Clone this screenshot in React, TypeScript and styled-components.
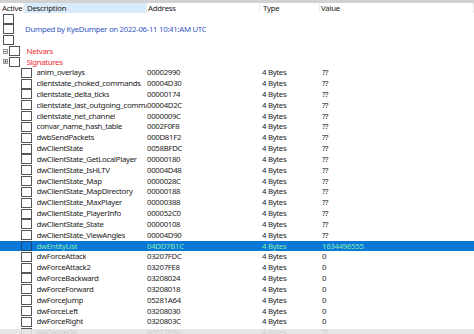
import React from 'react';
import styled, { createGlobalStyle } from 'styled-components';

const Global = createGlobalStyle`
  html, body { margin: 0; padding: 0; background: #ffffff; }
  body { width: 474px; height: 334px; overflow: hidden; font-family: "Noto Sans", "Open Sans", sans-serif; }
`;

const Frame = styled.div`
  position: relative;
  width: 474px;
  height: 334px;
  overflow: hidden;
  background: #ffffff;
  display: flex;
  flex-direction: column;
`;

const TopBar = styled.div`
  flex: none;
  height: 2.6px;
  background: #d2d2d2;
`;

const Header = styled.div`
  flex: none;
  display: grid;
  grid-template-columns: 24px 123px 113px 60px 1fr;
  height: 10.6px;
  font-size: 7.8px;
  letter-spacing: -0.25px;
  color: #1c1c1c;
  line-height: 11px;
`;

const HeadCell = styled.div<{ $hot?: boolean; $pad: number }>`
  padding-left: ${p => p.$pad}px;
  background: ${p => (p.$hot ? '#d9ebf9' : 'transparent')};
  border-right: 1px solid #ececec;
  white-space: nowrap;
  overflow: hidden;
`;

const List = styled.div`
  flex: 1;
  overflow: hidden;
  display: flex;
  flex-direction: column;
`;

const Row = styled.div<{ $selected?: boolean }>`
  flex: none;
  display: grid;
  grid-template-columns: 147px 115px 60px 1fr;
  height: 10.833px;
  align-items: center;
  font-size: 7.8px;
  letter-spacing: -0.3px;
  line-height: 10.833px;
  color: ${p => (p.$selected ? '#84eab0' : '#1c1c1c')};
  background: ${p => (p.$selected ? '#0a78d6' : 'transparent')};
`;

const TreeCell = styled.div<{ $indent: number; $wide?: boolean }>`
  grid-column: ${p => (p.$wide ? '1 / -1' : 'auto')};
  display: flex;
  align-items: center;
  padding-left: ${p => p.$indent}px;
  overflow: hidden;
  white-space: nowrap;
  height: 100%;
`;

const Expander = styled.svg`
  flex: none;
  width: 5px;
  height: 5px;
  margin-right: 1px;
`;

const Check = styled.span<{ $selected?: boolean }>`
  flex: none;
  box-sizing: border-box;
  width: 10.5px;
  height: 10px;
  border: 1px solid ${p => (p.$selected ? '#1b4a80' : '#555555')};
  background: ${p => (p.$selected ? 'transparent' : '#ffffff')};
`;

const Label = styled.span<{ $gap: number; $tone?: 'red' | 'blue' }>`
  margin-left: ${p => p.$gap}px;
  color: ${p => (p.$tone === 'red' ? '#ee2a2a' : p.$tone === 'blue' ? '#3557c4' : 'inherit')};
  overflow: hidden;
  white-space: nowrap;
`;

const Cell = styled.div`
  white-space: nowrap;
  overflow: hidden;
`;

const HScroll = styled.div`
  position: absolute;
  left: 0;
  right: 0;
  bottom: 0;
  height: 5.5px;
  background: rgba(226, 226, 226, 0.88);
`;

type Item = {
  kind: 'top' | 'group' | 'child';
  text?: string;
  tone?: 'red' | 'blue';
  open?: boolean;
  addr?: string;
  val?: string;
  selected?: boolean;
};

const children: [string, string, string][] = [
  ['anim_overlays', '00002990', '??'],
  ['clientstate_choked_commands', '00004D30', '??'],
  ['clientstate_delta_ticks', '00000174', '??'],
  ['clientstate_last_outgoing_command', '00004D2C', '??'],
  ['clientstate_net_channel', '0000009C', '??'],
  ['convar_name_hash_table', '0002F0F8', '??'],
  ['dwbSendPackets', '000D81F2', '??'],
  ['dwClientState', '0058BFDC', '??'],
  ['dwClientState_GetLocalPlayer', '00000180', '??'],
  ['dwClientState_IsHLTV', '00004D48', '??'],
  ['dwClientState_Map', '0000028C', '??'],
  ['dwClientState_MapDirectory', '00000188', '??'],
  ['dwClientState_MaxPlayer', '00000388', '??'],
  ['dwClientState_PlayerInfo', '000052C0', '??'],
  ['dwClientState_State', '00000108', '??'],
  ['dwClientState_ViewAngles', '00004D90', '??'],
  ['dwEntityList', '04DD7B1C', '1634496555'],
  ['dwForceAttack', '03207FDC', '0'],
  ['dwForceAttack2', '03207FE8', '0'],
  ['dwForceBackward', '03208024', '0'],
  ['dwForceForward', '03208018', '0'],
  ['dwForceJump', '05281A64', '0'],
  ['dwForceLeft', '03208030', '0'],
  ['dwForceRight', '0320803C', '0'],
  ['dwGameDir', '00627EB0', '??'],
];

const items: Item[] = [
  { kind: 'top' },
  { kind: 'top', text: 'Dumped by KyeDumper on 2022-06-11 10:41:AM UTC', tone: 'blue' },
  { kind: 'top' },
  { kind: 'group', text: 'Netvars', tone: 'red', open: true },
  { kind: 'group', text: 'Signatures', tone: 'red', open: false },
  ...children.map(([text, addr, val]) => ({
    kind: 'child' as const,
    text,
    addr,
    val,
    selected: text === 'dwEntityList',
  })),
];

const ExpIcon: React.FC<{ open?: boolean }> = ({ open }) => (
  <Expander viewBox="0 0 5 5">
    <rect x="0.5" y="0.5" width="4" height="4" fill="#fff" stroke="#7a7a7a" strokeWidth="0.8" />
    <line x1="1.3" y1="2.5" x2="3.7" y2="2.5" stroke="#333" strokeWidth="0.8" />
    {!open && <line x1="2.5" y1="1.3" x2="2.5" y2="3.7" stroke="#333" strokeWidth="0.8" />}
  </Expander>
);

export default function App() {
  return (
    <Frame>
      <Global />
      <TopBar />
      <Header>
        <HeadCell $pad={2}>Active</HeadCell>
        <HeadCell $pad={3} $hot>Description</HeadCell>
        <HeadCell $pad={1}>Address</HeadCell>
        <HeadCell $pad={3}>Type</HeadCell>
        <HeadCell $pad={1}>Value</HeadCell>
      </Header>
      <List>
        {items.map((it, i) => {
          const isChild = it.kind === 'child';
          const indent = isChild ? 21 : 3;
          const gap = isChild ? 5 : it.kind === 'group' ? 7 : 11.5;
          return (
            <Row key={i} $selected={it.selected}>
              <TreeCell $indent={indent} $wide={!isChild}>
                {it.kind === 'group' && <ExpIcon open={it.open} />}
                <Check $selected={it.selected} />
                {it.text && (
                  <Label $gap={gap} $tone={it.tone}>
                    {it.text}
                  </Label>
                )}
              </TreeCell>
              {isChild && (
                <>
                  <Cell>{it.addr}</Cell>
                  <Cell>4 Bytes</Cell>
                  <Cell>{it.val}</Cell>
                </>
              )}
            </Row>
          );
        })}
      </List>
      <HScroll />
    </Frame>
  );
}
